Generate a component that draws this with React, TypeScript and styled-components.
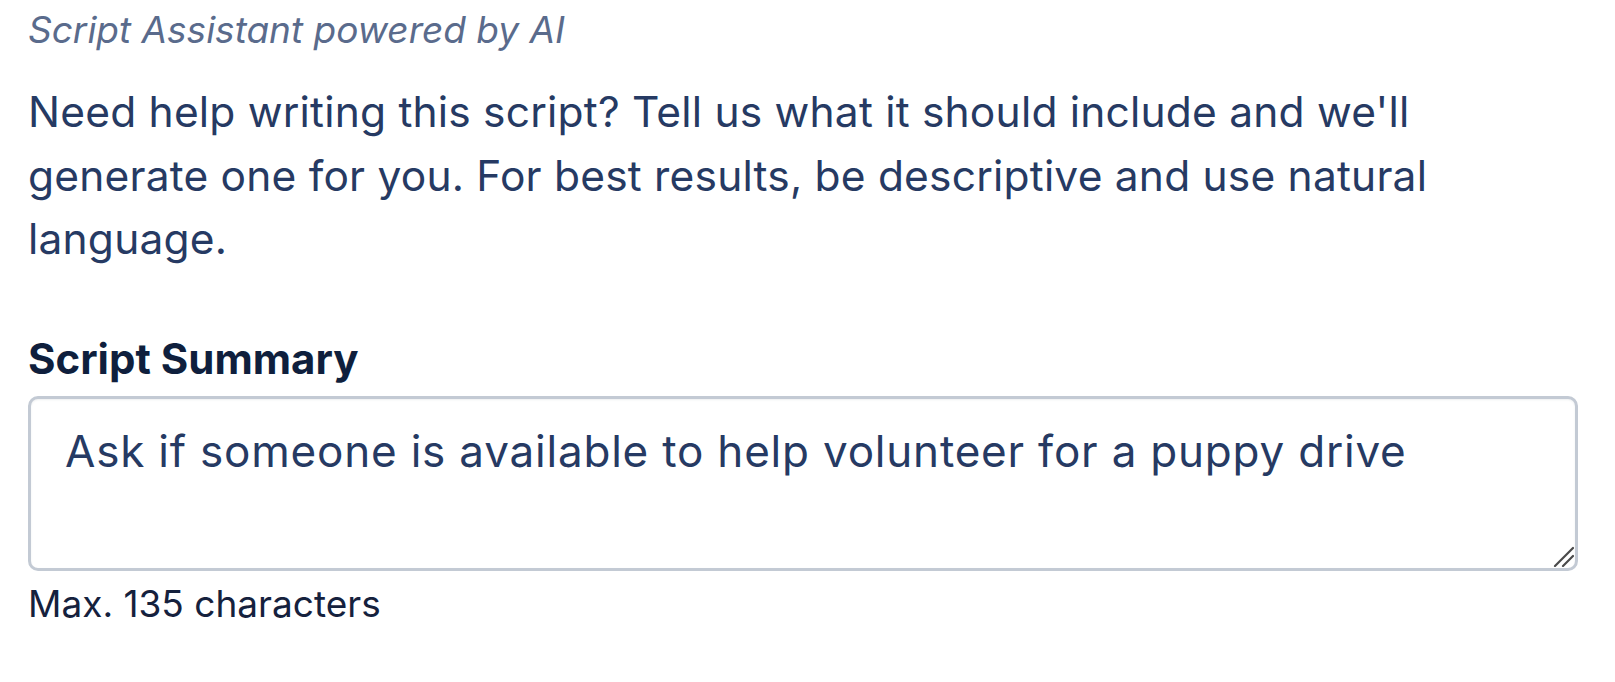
import styled, { createGlobalStyle } from "styled-components";

const GlobalStyle = createGlobalStyle`
  html, body {
    margin: 0;
    padding: 0;
    background: #ffffff;
    font-family: Inter, "Noto Sans", sans-serif;
  }
`;

const Panel = styled.div`
  width: 1550px;
  padding: 8px 0 0 28px;
  display: flex;
  flex-direction: column;
`;

const Caption = styled.p`
  margin: 0;
  font-size: 37px;
  line-height: 44px;
  font-style: italic;
  color: #5a6b8c;
`;

const Intro = styled.p`
  margin: 28px 0 0;
  max-width: 1502px;
  font-size: 42.5px;
  letter-spacing: 0.2px;
  line-height: 63.5px;
  color: #263a63;
`;

const Field = styled.div`
  margin-top: 63px;
  display: flex;
  flex-direction: column;
`;

const Label = styled.label`
  font-size: 42px;
  font-weight: 700;
  line-height: 50px;
  color: #0f1f3d;
`;

const InputWrap = styled.div`
  position: relative;
  margin-top: 12px;
  display: flex;
`;

const TextArea = styled.textarea`
  box-sizing: border-box;
  width: 100%;
  height: 175px;
  padding: 24px 34px;
  border: 3px solid #c3cad4;
  border-radius: 10px;
  box-shadow: inset 0 1px 2px rgba(30, 45, 70, 0.08);
  font-family: Inter, "Noto Sans", sans-serif;
  font-size: 44px;
  letter-spacing: 0.8px;
  line-height: 56px;
  color: #263a63;
  background: #fff;
  resize: none;
  outline: none;
`;

const Grip = styled.svg`
  position: absolute;
  right: 4px;
  bottom: 4px;
  width: 22px;
  height: 22px;
  pointer-events: none;
`;

const Hint = styled.span`
  margin-top: 11px;
  font-size: 37px;
  line-height: 44px;
  color: #15213d;
`;

export default function App() {
  return (
    <>
      <GlobalStyle />
      <Panel>
        <Caption>Script Assistant powered by AI</Caption>
        <Intro>
          Need help writing this script? Tell us what it should include and
          we'll generate one for you. For best results, be descriptive and use
          natural language.
        </Intro>
        <Field>
          <Label htmlFor="summary">Script Summary</Label>
          <InputWrap>
            <TextArea
              id="summary"
              defaultValue="Ask if someone is available to help volunteer for a puppy drive"
            />
            <Grip viewBox="0 0 22 22">
              <path
                d="M3 21 L21 3 M11 21 L21 11"
                stroke="#4a4a4a"
                strokeWidth="2.2"
                strokeLinecap="round"
              />
            </Grip>
          </InputWrap>
          <Hint>Max. 135 characters</Hint>
        </Field>
      </Panel>
    </>
  );
}
